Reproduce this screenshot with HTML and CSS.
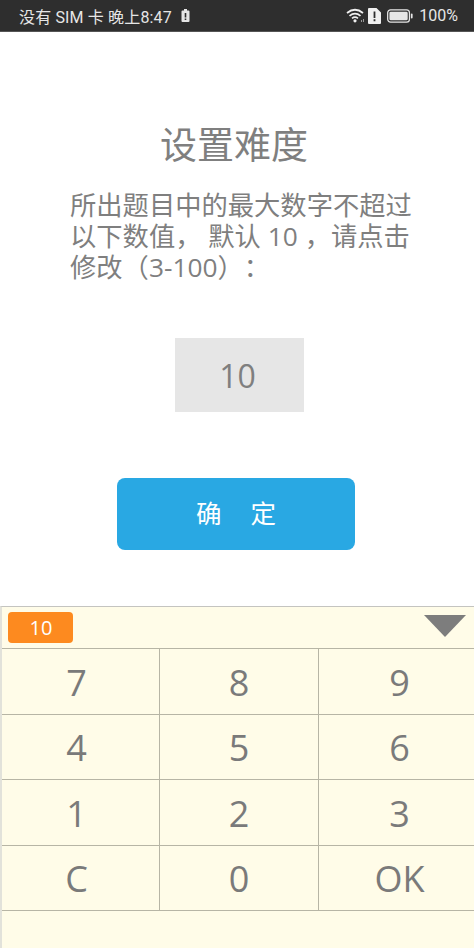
FILE: index.html
```html
<!DOCTYPE html>
<html lang="zh">
<head>
<meta charset="utf-8">
<title>设置难度</title>
<link rel="stylesheet" href="styles.css">
</head>
<body>
<div class="screen">
  <header class="status">
    <div class="status-side status-left">
      <span>没有 SIM 卡 晚上8:47</span>
      <svg class="ic-usb" width="9" height="13" viewBox="0 0 9 13"><path fill="#e6e6e6" fill-rule="evenodd" d="M3 0h3v1.500h1.500a1 1 0 0 1 1 1V12a1 1 0 0 1-1 1h-6a1 1 0 0 1-1-1V2.500a1 1 0 0 1 1-1H3zM3.700 4v4.500h1.600V4zM3.700 9.500V11h1.600V9.500z"/></svg>
    </div>
    <div class="status-side status-right">
      <svg width="19" height="15" viewBox="0 0 19 15"><g fill="none" stroke="#f0f0f0" stroke-width="1.700"><path d="M1 5 Q9 -1.500 17 5"/><path d="M3.500 7.800 Q9 3.300 14.500 7.800"/><path d="M6 10.400 Q9 8 12 10.400"/></g><circle cx="9" cy="12.800" r="1.600" fill="#f0f0f0"/><path d="M15.500 12v2M17.500 11v3" stroke="#999" stroke-width="1"/></svg>
      <svg width="13" height="16" viewBox="0 0 13 16"><path fill="#f0f0f0" fill-rule="evenodd" d="M1 0h7.500L13 4.500V15a1 1 0 0 1-1 1H1a1 1 0 0 1-1-1V1a1 1 0 0 1 1-1zM5.600 3.500v6.500h1.800V3.500zM5.600 11.300v1.900h1.800v-1.900z"/></svg>
      <svg class="battery" width="26" height="14" viewBox="0 0 27 14"><rect x=".7" y=".7" width="22.600" height="12.600" rx="3" fill="none" stroke="#e6e6e6" stroke-width="1.300"/><rect x="2.500" y="2.500" width="19" height="9" rx="1.500" fill="#e6e6e6"/><rect x="24.800" y="4.500" width="1.800" height="5" rx=".9" fill="#e6e6e6"/></svg>
      <span class="pct">100%</span>
    </div>
  </header>

  <main class="content">
    <h1 class="title">设置难度</h1>
    <p class="desc">所出题目中的最大数字不超过以下数值， 默认 10 ，请点击修改（3-100）：</p>
    <div class="value">10</div>
    <button class="confirm"><span>确</span><span>定</span></button>
  </main>

  <section class="keyboard">
    <div class="kb-top">
      <span class="badge">10</span>
      <svg class="collapse" width="42" height="22" viewBox="0 0 42 22"><path d="M0 0H42L21 22Z" fill="#7d7d7d"/></svg>
    </div>
    <div class="keys">
      <div class="key">7</div><div class="key">8</div><div class="key">9</div>
      <div class="key">4</div><div class="key">5</div><div class="key">6</div>
      <div class="key">1</div><div class="key">2</div><div class="key">3</div>
      <div class="key">C</div><div class="key">0</div><div class="key">OK</div>
    </div>
  </section>
</div>
</body>
</html>
```
FILE: styles.css
```css
* { box-sizing: border-box; }
html, body { margin: 0; padding: 0; }
body { font-family: "Open Sans", "Noto Sans CJK SC", sans-serif; background: #fff; }
.screen { width: 474px; height: 948px; display: flex; flex-direction: column; overflow: hidden; }
.status { height: 32px; flex: none; background: #2e2e2e; border-bottom: 1px solid #555; color: #e6e6e6; display: flex; justify-content: space-between; align-items: center; padding: 0 16px 0 19px; font-size: 16px; font-family: "Roboto", "Noto Sans CJK SC", sans-serif; }
.status-side { display: flex; align-items: center; }
.status-left { gap: 9px; }
.status-left span { letter-spacing: 0.150px; }
.status-right { gap: 3px; }
.battery { margin-left: 3px; }
.pct { margin-left: 3px; }
.content { flex: 1; display: flex; flex-direction: column; align-items: center; color: #7f7f7f; }
.title { margin: 88px 6px 0 0; font-size: 37px; line-height: 50px; font-weight: 400; }
.desc { margin: 20px 0 0 10px; width: 344px; font-size: 26.300px; line-height: 31px; text-spacing-trim: space-all; }
.value { margin: 55px 0 0 5px; width: 129px; height: 74px; padding-right: 4px; background: #e6e6e6; font-size: 32px; display: flex; align-items: center; justify-content: center; }
.confirm { margin: 66px 2px 0 0; width: 238px; height: 72px; border: 0; border-radius: 8px; background: #29a8e3; color: #fff; font-size: 25.500px; line-height: 1; font-family: inherit; padding: 0; display: flex; align-items: center; justify-content: center; gap: 29px; }
.keyboard { flex: none; height: 342px; background: #fffce8; border-top: 1px solid #c4c4c0; border-left: 2px solid #e2e2da; }
.kb-top { height: 41px; display: flex; justify-content: space-between; align-items: center; padding: 0 8px 0 6px; }
.badge { width: 65px; height: 31px; padding-left: 1px; background: #fd8a1f; border-radius: 4px; color: #fff; font-size: 20px; display: flex; align-items: center; justify-content: center; }
.collapse { margin-bottom: 4px; }
.keys { display: grid; grid-template-columns: 158px 159px 155px; grid-auto-rows: 65.500px; border-top: 1px solid #b7b5a5; }
.key { display: flex; align-items: center; justify-content: center; padding-top: 2px; font-size: 36px; font-weight: 500; color: #7a7a7a; border-bottom: 1px solid #b7b5a5; border-right: 1px solid #b7b5a5; }
.key:nth-child(3n+1) { padding-right: 8px; }
.key:nth-child(3n) { border-right: 0; padding-left: 6px; }
```
